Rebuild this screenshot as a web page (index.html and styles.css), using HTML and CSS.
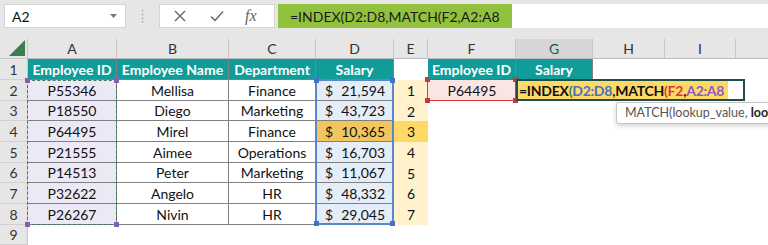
FILE: index.html
```html
<!DOCTYPE html>
<html>
<head>
<meta charset="utf-8">
<link rel="stylesheet" href="styles.css">
</head>
<body>
<div class="topbar">
  <div class="namebox"><span>A2</span><svg class="caret" width="7" height="4" viewBox="0 0 7 4"><path d="M0 0h7L3.5 4z" fill="#777"/></svg></div>
  <div class="grip"><svg width="3" height="14" viewBox="0 0 3 14"><circle cx="1.5" cy="1.5" r="1" fill="#b5b5b5"/><circle cx="1.5" cy="5.5" r="1" fill="#b5b5b5"/><circle cx="1.5" cy="9.5" r="1" fill="#b5b5b5"/><circle cx="1.5" cy="13" r="1" fill="#b5b5b5"/></svg></div>
  <div class="fxbtns">
    <svg width="14" height="14" viewBox="0 0 14 14"><path d="M2 2L12 12M12 2L2 12" stroke="#666" stroke-width="1.4" fill="none"/></svg>
    <svg width="16" height="14" viewBox="0 0 16 14"><path d="M2 7.5L6 11.5L14 2.5" stroke="#666" stroke-width="1.5" fill="none"/></svg>
    <span class="fx">fx</span>
  </div>
  <div class="formula"><div class="fgreen">=INDEX(D2:D8,MATCH(F2,A2:A8</div></div>
</div>
<div class="sheetwrap">
<div class="sheet">
  <div class="corner"><svg width="16" height="16" viewBox="0 0 16 16"><path d="M16 0V16H0z" fill="#3c7d54"/></svg></div>
  <div class="ch">A</div><div class="ch">B</div><div class="ch">C</div><div class="ch">D</div><div class="ch">E</div><div class="ch">F</div><div class="ch active">G</div><div class="ch">H</div><div class="ch">I</div><div class="ch last"></div>

  <div class="rh">1</div>
  <div class="c th tb">Employee ID</div><div class="c th tb">Employee Name</div><div class="c th tb">Department</div><div class="c th tb">Salary</div><div class="c"></div><div class="c th tb">Employee ID</div><div class="c th tb">Salary</div><div class="c"></div><div class="c"></div><div class="c"></div>

  <div class="rh">2</div>
  <div class="c tb sa">P55346</div><div class="c tb">Mellisa</div><div class="c tb">Finance</div><div class="c tb sd money"><span>$</span><span>21,594</span></div><div class="c ey">1</div><div class="c pk">P64495</div><div class="c"></div><div class="c"></div><div class="c"></div><div class="c"></div>

  <div class="rh">3</div>
  <div class="c tb sa">P18550</div><div class="c tb">Diego</div><div class="c tb">Marketing</div><div class="c tb sd money"><span>$</span><span>43,723</span></div><div class="c ey">2</div><div class="c"></div><div class="c"></div><div class="c"></div><div class="c"></div><div class="c"></div>

  <div class="rh">4</div>
  <div class="c tb sa">P64495</div><div class="c tb">Mirel</div><div class="c tb">Finance</div><div class="c tb hd money"><span>$</span><span>10,365</span></div><div class="c eh">3</div><div class="c"></div><div class="c"></div><div class="c"></div><div class="c"></div><div class="c"></div>

  <div class="rh">5</div>
  <div class="c tb sa">P21555</div><div class="c tb">Aimee</div><div class="c tb">Operations</div><div class="c tb sd money"><span>$</span><span>16,703</span></div><div class="c ey">4</div><div class="c"></div><div class="c"></div><div class="c"></div><div class="c"></div><div class="c"></div>

  <div class="rh">6</div>
  <div class="c tb sa">P14513</div><div class="c tb">Peter</div><div class="c tb">Marketing</div><div class="c tb sd money"><span>$</span><span>11,067</span></div><div class="c ey">5</div><div class="c"></div><div class="c"></div><div class="c"></div><div class="c"></div><div class="c"></div>

  <div class="rh">7</div>
  <div class="c tb sa">P32622</div><div class="c tb">Angelo</div><div class="c tb">HR</div><div class="c tb sd money"><span>$</span><span>48,332</span></div><div class="c ey">6</div><div class="c"></div><div class="c"></div><div class="c"></div><div class="c"></div><div class="c"></div>

  <div class="rh">8</div>
  <div class="c tb sa">P26267</div><div class="c tb">Nivin</div><div class="c tb">HR</div><div class="c tb sd money"><span>$</span><span>29,045</span></div><div class="c ey">7</div><div class="c"></div><div class="c"></div><div class="c"></div><div class="c"></div><div class="c"></div>

  <div class="rh">9</div>
  <div class="c"></div><div class="c"></div><div class="c"></div><div class="c"></div><div class="c"></div><div class="c"></div><div class="c"></div><div class="c"></div><div class="c"></div><div class="c"></div>
</div>
<div class="overlay">
  <div class="range range-a"><i class="h tl"></i><i class="h tr"></i><i class="h bl"></i><i class="h br"></i></div>
  <div class="range range-d"><i class="h tl"></i><i class="h tr"></i><i class="h bl"></i><i class="h br"></i></div>
  <div class="range range-f"><i class="h tl"></i><i class="h tr"></i><i class="h bl"></i><i class="h br"></i></div>
  <div class="editbox">
    <div class="edittext">=INDEX<span class="pg">(</span><span class="rb">D2:D8</span>,MATCH<span class="rr">(</span><span class="rr">F2</span>,<span class="rp">A2:A8</span></div>
    <div class="tooltip">MATCH(lookup_value, <b>lookup_array</b>, [match_type])</div>
  </div>
</div>
</div>
</body>
</html>
```

FILE: styles.css
```css
* { box-sizing: border-box; }
body {
  margin: 0;
  width: 768px;
  height: 245px;
  overflow: hidden;
  background: #fff;
  font-family: Lato, "Open Sans", "Liberation Sans", sans-serif;
  color: #111;
}
.topbar {
  display: flex;
  align-items: flex-start;
  height: 39px;
  padding-top: 4px;
  background: #e6e6e6;
}
.namebox {
  margin-left: 4px;
  width: 122px;
  height: 24px;
  background: #fff;
  border: 1px solid #d4d4d4;
  display: flex;
  align-items: center;
  justify-content: space-between;
  padding: 0 8px 0 7px;
  font-size: 14px;
}
.grip {
  width: 33px;
  height: 24px;
  display: flex;
  align-items: center;
  justify-content: center;
}
.fxbtns {
  width: 116px;
  height: 24px;
  background: #fff;
  border: 1px solid #d4d4d4;
  display: flex;
  align-items: center;
  padding-left: 13px;
  gap: 22px;
}
.fx {
  font-family: "Liberation Serif", serif;
  font-style: italic;
  font-size: 16px;
  color: #666;
  margin-left: -2px;
}
.formula {
  flex: 1;
  margin-left: 3px;
  height: 24px;
  background: #fff;
}
.fgreen {
  width: 234px;
  height: 24px;
  background: #92c13e;
  padding-left: 12px;
  display: flex;
  align-items: center;
  font-size: 14px;
  color: #1a1a1a;
  white-space: nowrap;
}
.sheetwrap {
  position: relative;
}
.sheet, .overlay {
  display: grid;
  grid-template-columns: 28px 89px 112px 87px 78px 34px 88px 77px 72px 71px 32px;
  grid-template-rows: 20px 21px 21px 20px 21px 21px 20px 21px 21px 20px;
  font-size: 14px;
}
.overlay {
  position: absolute;
  inset: 0;
  pointer-events: none;
}
.corner {
  background: #e6e6e6;
  border-right: 1px solid #c6c6c6;
  border-bottom: 1px solid #c6c6c6;
  display: flex;
  align-items: flex-end;
  justify-content: flex-end;
  padding: 0 2px 2px 0;
}
.ch {
  background: #e6e6e6;
  border-right: 1px solid #c6c6c6;
  border-bottom: 1px solid #bdbdbd;
  display: flex;
  align-items: center;
  justify-content: center;
  color: #333;
}
.ch.active { background: #d6d6d6; color: #1e5a36; }
.ch.last { border-right: none; }
.rh {
  background: #e6e6e6;
  border-right: 1px solid #c6c6c6;
  border-bottom: 1px solid #d0d0d0;
  display: flex;
  align-items: center;
  justify-content: center;
  color: #333;
}
.c {
  display: flex;
  align-items: center;
  justify-content: center;
  white-space: nowrap;
  overflow: hidden;
}
.tb { border-right: 1px solid #808080; border-bottom: 1px solid #808080; }
.th { background: #109c98; color: #fff; font-weight: 700; }
.sa { background: #ece9f6; }
.sd { background: #e4edf8; }
.hd { background: #f1c65e; }
.ey { background: #fff2cc; }
.eh { background: #ffd966; }
.pk { background: #fbe4e4; }
.money { justify-content: space-between; padding: 0 8px 0 9px; }
.range {
  position: relative;
}
.range-a { grid-column: 2; grid-row: 3 / 10; border: 1.5px dashed #3e7d5a; margin: 0 0 0 -1px; }
.range-d { grid-column: 5; grid-row: 3 / 10; border: 2px solid #5a86d0; margin: -1px 0 0 -1px; }
.range-f { grid-column: 7; grid-row: 3; border: 1.5px solid #d04040; margin: -1px 0 0 -1px; }
.h {
  position: absolute;
  width: 5px;
  height: 5px;
}
.range-a .h { background: #8060b8; }
.range-d .h { background: #4472c4; }
.range-f .h { background: #c83a3a; }
.tl { left: -3px; top: -3px; }
.tr { right: -3px; top: -3px; }
.bl { left: -3px; bottom: -3px; }
.br { right: -3px; bottom: -3px; }
.editbox {
  grid-column: 8 / 12;
  grid-row: 3;
  width: 229px;
  margin: -1px 0 0 0;
  height: 22px;
  border: 2px solid #1f4d4a;
  background: #fff;
  position: relative;
  z-index: 3;
}
.edittext {
  width: 210px;
  height: 100%;
  background: #ffd966;
  font-weight: 700;
  font-size: 14px;
  letter-spacing: -0.25px;
  display: flex;
  align-items: center;
  padding-left: 1px;
  white-space: nowrap;
  color: #111;
}
.pg { color: #2e8b57; }
.rb { color: #4472c4; }
.rr { color: #d03c3c; }
.rp { color: #8a5bc4; }
.tooltip {
  position: absolute;
  left: 98px;
  top: 21px;
  height: 22px;
  line-height: 20px;
  padding: 0 8px;
  background: #fff;
  border: 1px solid #c4c4c4;
  border-radius: 3px;
  box-shadow: 0 2px 5px rgba(0,0,0,0.18);
  font-size: 12.5px;
  color: #555;
  white-space: nowrap;
  font-weight: 400;
  letter-spacing: 0;
}
.tooltip b { color: #222; font-weight: 700; }
```
